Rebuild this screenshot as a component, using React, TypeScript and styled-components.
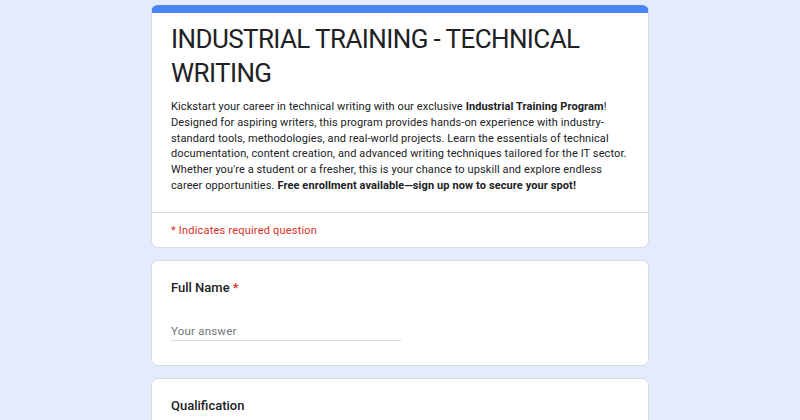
import React from 'react';
import styled, { createGlobalStyle } from 'styled-components';

const GlobalStyle = createGlobalStyle`
    body {
        margin: 0;
        background: #e3ebfc;
        font-family: Roboto, "Liberation Sans", Arial, sans-serif;
        color: #202124;
    }
`

export default function App() {
    return (
        <>
            <GlobalStyle />
            <Page>
                <HeaderCard>
                    <HeaderBody>
                        <Title>INDUSTRIAL TRAINING - TECHNICAL WRITING</Title>
                        <Description>
                            Kickstart your career in technical writing with our exclusive <b>Industrial Training Program</b>!
                            Designed for aspiring writers, this program provides hands-on experience with industry-standard
                            tools, methodologies, and real-world projects. Learn the essentials of technical documentation,
                            content creation, and advanced writing techniques tailored for the IT sector. Whether you're a
                            student or a fresher, this is your chance to upskill and explore endless career
                            opportunities. <b>Free enrollment available—sign up now to secure your spot!</b>
                        </Description>
                    </HeaderBody>
                    <RequiredNote>* Indicates required question</RequiredNote>
                </HeaderCard>

                <QuestionCard>
                    <Question>
                        Full Name <Star>*</Star>
                    </Question>
                    <AnswerInput placeholder="Your answer" />
                </QuestionCard>

                <QuestionCard>
                    <Question>Qualification</Question>
                </QuestionCard>
            </Page>
        </>
    )
}

const Page = styled.div`
    width: 498px;
    margin: 5px auto 0;
    display: flex;
    flex-direction: column;
    gap: 12px;
`

const Card = styled.div`
    background: #fff;
    border-radius: 7px;
    border: 1px solid #dadce0;
    box-sizing: border-box;
`

const HeaderCard = styled(Card)`
    border-top: 8px solid #4a86f0;
    overflow: hidden;
`

const HeaderBody = styled.div`
    padding: 9px 16px 18px 19px;
    border-bottom: 1px solid #dadce0;
`

const Title = styled.h1`
    margin: 0 0 9px;
    font-size: 26px;
    font-weight: 400;
    line-height: 34px;
    letter-spacing: -0.6px;
    color: #202124;
    width: 430px;
`

const Description = styled.p`
    margin: 0;
    font-size: 11px;
    line-height: 15.8px;
    letter-spacing: 0.1px;
    color: #202124;

    b {
        font-weight: 700;
    }
`

const RequiredNote = styled.div`
    padding: 11px 19px 9px;
    font-size: 11px;
    line-height: 14px;
    letter-spacing: 0.2px;
    color: #d93025;
`

const QuestionCard = styled(Card)`
    padding: 18px 19px 24px;
`

const Question = styled.div`
    font-size: 13px;
    font-weight: 500;
    line-height: 18px;
    color: #202124;
`

const Star = styled.span`
    color: #d93025;
`

const AnswerInput = styled.input`
    display: block;
    margin-top: 26px;
    width: 230px;
    border: none;
    border-bottom: 1px solid #dadce0;
    padding: 0 0 1px;
    font-family: Roboto, "Liberation Sans", Arial, sans-serif;
    font-size: 11.5px;
    line-height: 16px;
    letter-spacing: 0.2px;
    outline: none;
    color: #202124;

    &::placeholder {
        color: #70757a;
    }
`
